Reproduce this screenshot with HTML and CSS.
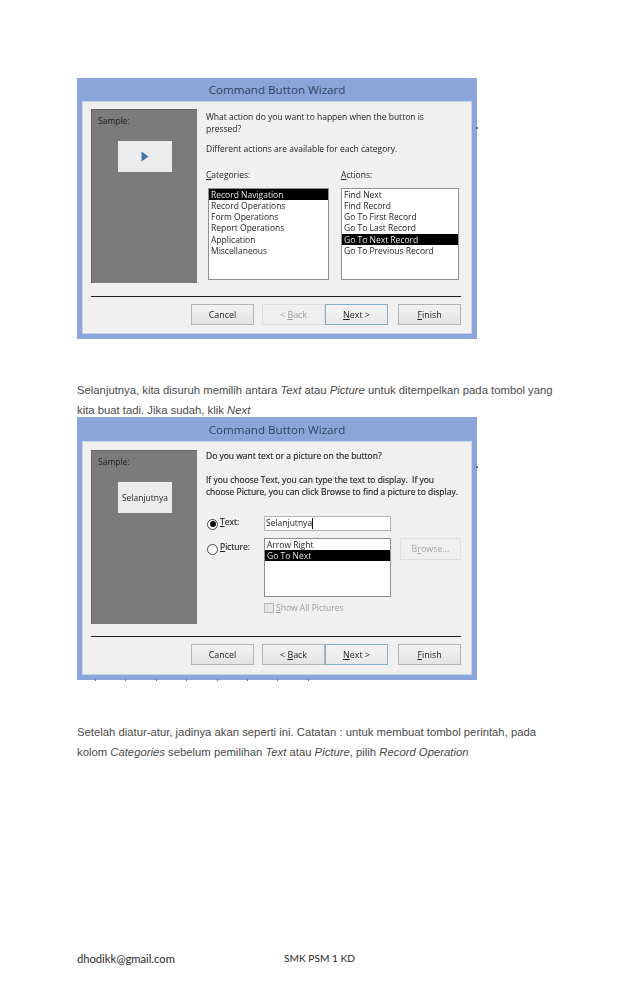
FILE: index.html
```html
<!DOCTYPE html>
<html lang="id">
<head>
<meta charset="utf-8">
<title>Command Button Wizard</title>
<link rel="stylesheet" href="styles.css">
</head>
<body>
<main class="page">
  <section class="dialog dialog-first">
    <h2 class="title">Command Button Wizard</h2>
    <div class="inner">
      <div class="top">
        <aside class="sample">
          <div class="sample-label">Sample:</div>
          <div class="sample-btn sample-btn-icon"><svg width="8" height="11" viewBox="0 0 8 11"><path d="M0.5 0.5L7.5 5.5L0.5 10.5Z" fill="#3f76a8"/></svg></div>
        </aside>
        <div class="content">
          <p class="intro">What action do you want to happen when the button is<br>pressed?</p>
          <p class="intro intro-gap">Different actions are available for each category.</p>
          <div class="lists">
            <div class="col col-cat">
              <div class="list-label"><u>C</u>ategories:</div>
              <ul class="listbox">
                <li class="sel">Record Navigation</li>
                <li>Record Operations</li>
                <li>Form Operations</li>
                <li>Report Operations</li>
                <li>Application</li>
                <li>Miscellaneous</li>
              </ul>
            </div>
            <div class="col col-act">
              <div class="list-label"><u>A</u>ctions:</div>
              <ul class="listbox">
                <li>Find Next</li>
                <li>Find Record</li>
                <li>Go To First Record</li>
                <li>Go To Last Record</li>
                <li class="sel">Go To Next Record</li>
                <li>Go To Previous Record</li>
              </ul>
            </div>
          </div>
        </div>
      </div>
      <div class="rule"></div>
      <div class="buttons">
        <button class="btn">Cancel</button>
        <span class="pair">
          <button class="btn btn-disabled">&lt; <u>B</u>ack</button>
          <button class="btn btn-default"><u>N</u>ext &gt;</button>
        </span>
        <button class="btn"><u>F</u>inish</button>
      </div>
    </div>
  </section>

  <p class="para para-first">Selanjutnya, kita disuruh memilih antara <em>Text</em> atau <em>Picture</em> untuk ditempelkan pada tombol yang<br>kita buat tadi. Jika sudah, klik <em>Next</em></p>

  <section class="dialog dialog-second">
    <h2 class="title">Command Button Wizard</h2>
    <div class="inner">
      <div class="top">
        <aside class="sample">
          <div class="sample-label">Sample:</div>
          <div class="sample-btn">Selanjutnya</div>
        </aside>
        <div class="content">
          <p class="intro bold">Do you want text or a picture on the button?</p>
          <p class="intro bold intro-gap2">If you choose Text, you can type the text to display.&nbsp; If you<br>choose Picture, you can click Browse to find a picture to display.</p>
          <div class="choice">
            <div class="radios">
              <div class="radio-row"><span class="radio radio-on"></span><span class="bold"><u>T</u>ext:</span></div>
              <div class="radio-row radio-row-2"><span class="radio"></span><span class="bold"><u>P</u>icture:</span></div>
            </div>
            <div class="fields">
              <div class="textbox">Selanjutnya<span class="caret"></span></div>
              <ul class="listbox listbox-pic">
                <li>Arrow Right</li>
                <li class="sel">Go To Next</li>
              </ul>
              <label class="check"><span class="checkbox"></span><span><u>S</u>how All Pictures</span></label>
            </div>
            <button class="btn btn-browse">B<u>r</u>owse...</button>
          </div>
        </div>
      </div>
      <div class="rule rule-second"></div>
      <div class="buttons">
        <button class="btn">Cancel</button>
        <span class="pair">
          <button class="btn">&lt; <u>B</u>ack</button>
          <button class="btn btn-default"><u>N</u>ext &gt;</button>
        </span>
        <button class="btn"><u>F</u>inish</button>
      </div>
    </div>
  </section>

  <p class="para para-second">Setelah diatur-atur, jadinya akan seperti ini. Catatan : untuk membuat tombol perintah, pada<br>kolom <em>Categories</em> sebelum pemilihan <em>Text</em> atau <em>Picture</em>, pilih <em>Record Operation</em></p>

  <footer class="footer"><span class="mail">dhodikk@gmail.com</span><span class="school">SMK PSM 1 KD</span></footer>
</main>
</body>
</html>
```

FILE: styles.css
```css
* { box-sizing: border-box; }
html, body { margin: 0; padding: 0; background: #fff; }
body { width: 638px; height: 1004px; overflow: hidden; }
.page { padding: 78px 0 0 77px; width: 638px; }

.dialog {
  position: relative;
  width: 400px;
  height: 261px;
  background: #8ba5d8;
  padding: 0 6px 6px;
  display: flex;
  flex-direction: column;
  font-family: "Open Sans", sans-serif;
  font-size: 8.5px;
  color: #1c1c1c;
  filter: blur(0.3px);
}
.dialog::after {
  content: "";
  position: absolute;
  right: -1px;
  top: 49px;
  width: 2px;
  height: 2px;
  background: #5b6880;
}
.dialog-second { height: 263px; }
.dialog-second::before {
  content: "";
  position: absolute;
  left: 18px;
  bottom: -1px;
  width: 232px;
  height: 2px;
  background: repeating-linear-gradient(90deg, #6d7686 0 1px, transparent 1px 30.4px);
}
.title {
  margin: 0;
  height: 24px;
  line-height: 23px;
  text-align: center;
  font-weight: 400;
  font-size: 11.6px;
  color: #2f4365;
}
.dialog-second .title { height: 25px; line-height: 25px; }
.inner {
  flex: 1;
  background: #f0f0f0;
  box-shadow: 0 0 0 1px #c9d4ea;
  padding: 7px 8px 0;
  display: flex;
  flex-direction: column;
}
.dialog-second .inner { padding-top: 8px; }
.top { display: flex; height: 174px; }
.sample {
  width: 106px;
  height: 174px;
  background: #7b7b7b;
  border-top: 1px solid #666;
  border-left: 1px solid #666;
  padding: 5px 6px;
  flex: none;
}
.sample-label { color: #1c1c1c; line-height: 12px; }
.sample-btn {
  width: 54px;
  height: 31px;
  margin: 14px 0 0 20px;
  background: #ececec;
  display: flex;
  align-items: center;
  justify-content: center;
  color: #222;
}
.content { padding-left: 9px; width: 266px; }
.dialog-first .content { padding-top: 2px; }
.intro { margin: 0; line-height: 11.5px; white-space: nowrap; }
.intro-gap { margin-top: 9px; }
.intro-gap2 { margin-top: 12px; line-height: 12px; }
.bold { font-weight: 500; -webkit-text-stroke: 0.15px #222; }
.lists { display: flex; margin-top: 14px; }
.col-cat { width: 135px; }
.col-act { width: 118px; }
.list-label { line-height: 12px; }
.listbox {
  list-style: none;
  margin: 7px 0 0;
  padding: 0;
  background: #fff;
  border: 1px solid #8f8f8f;
  height: 92px;
  line-height: 11.3px;
}
.col-cat .listbox { width: 121px; margin-left: 2px; }
.col-act .listbox { width: 118px; }
.listbox li { padding-left: 2px; height: 11.3px; white-space: nowrap; }
.listbox .sel { background: #000; color: #e6e6e6; }
.rule { height: 1px; background: #1d1d1d; margin-top: 13px; width: 370px; }
.rule-second { margin-top: 12px; }
.buttons { display: flex; margin-top: 7px; padding-left: 100px; }
.pair { display: flex; margin-left: 8px; margin-right: 10px; }
.btn {
  width: 63px;
  height: 21px;
  padding: 0;
  font-family: inherit;
  font-size: 8.9px;
  color: #222;
  background: linear-gradient(#f2f2f2, #e3e3e3);
  border: 1px solid #b4b4b4;
}
.btn-disabled { color: #9a9a9a; background: #efefef; border-color: #dcdcdc; }
.btn-default { border-color: #7fb0d0; background: linear-gradient(#f3f3f3, #e8e8e8); }
.choice { display: flex; margin-top: 18px; }
.radios { width: 58px; padding-left: 1px; }
.radio-row { display: flex; align-items: flex-start; gap: 2px; height: 14px; line-height: 12px; }
.radio-row-2 { margin-top: 11px; }
.radio {
  width: 11px;
  height: 11px;
  margin-top: 3px;
  border-radius: 50%;
  border: 1px solid #444;
  background: #fff;
  display: flex;
  align-items: center;
  justify-content: center;
}
.radio-on::after {
  content: "";
  width: 6px;
  height: 6px;
  background: #111;
  border-radius: 50%;
}
.fields { width: 127px; }
.textbox {
  height: 15px;
  width: 127px;
  background: #fff;
  border: 1px solid #b5b5b5;
  line-height: 12px;
  padding-left: 1px;
  display: flex;
  align-items: center;
}
.caret { width: 1px; height: 11px; background: #111; }
.listbox-pic { width: 127px; height: 59px; margin: 7px 0 0; line-height: 11px; }
.listbox-pic li { height: 11.3px; }
.check { display: flex; align-items: center; gap: 2px; margin-top: 4px; color: #9a9a9a; height: 14px; }
.checkbox { width: 10px; height: 10px; border: 1px solid #b5b5b5; background: #e4e4e4; }
.btn-browse {
  width: 61px;
  height: 22px;
  margin: 22px 0 0 9px;
  color: #a5a5a5;
  background: #efefef;
  border-color: #dfdfdf;
}

.para {
  margin: 0;
  font-family: "Liberation Sans", Arial, sans-serif;
  font-size: 11.3px;
  line-height: 19.5px;
  color: #4a4a4a;
  white-space: nowrap;
}
.para-first { margin-top: 42px; height: 36px; }
.para-second { margin-top: 43px; }
.footer {
  position: absolute;
  left: 77px;
  top: 951px;
  font-family: Lato, sans-serif;
  font-size: 11.2px;
  line-height: 15px;
  color: #2a2a2a;
  display: flex;
}
.mail { width: 207px; }
.school { font-size: 10.2px; }
```
